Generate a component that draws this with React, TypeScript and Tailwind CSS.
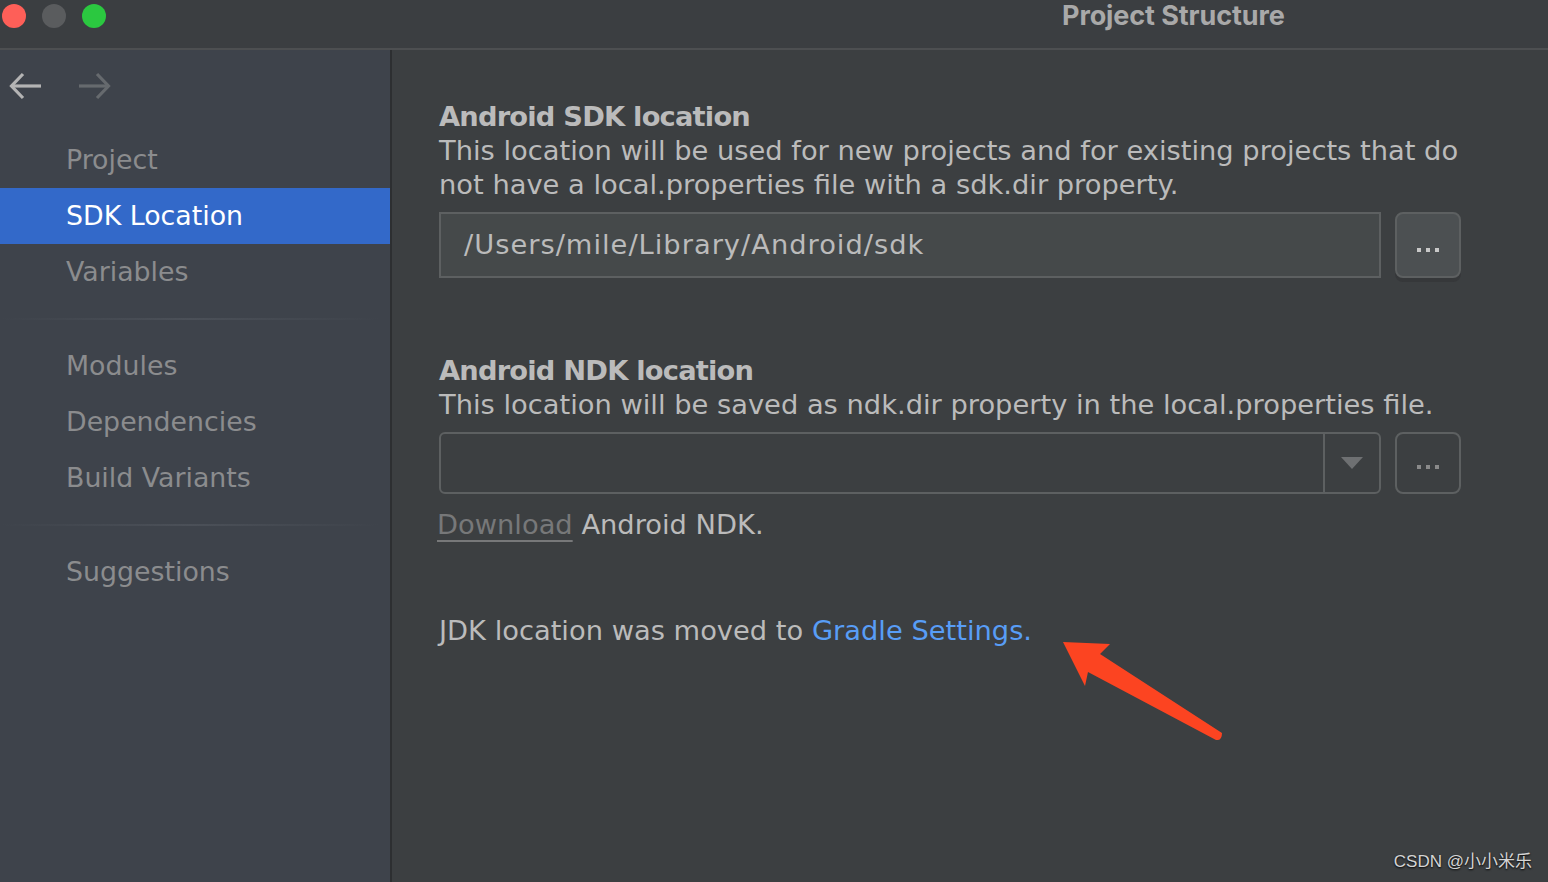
import React from 'react'

const NAV_GROUPS: string[][] = [
  ['Project', 'SDK Location', 'Variables'],
  ['Modules', 'Dependencies', 'Build Variants'],
  ['Suggestions'],
]

const UI_FONT = "font-['DejaVu_Sans',sans-serif]"

function Dots({ dim }: { dim?: boolean }) {
  const c = dim ? 'bg-[#8a8a8a]' : 'bg-[#c8c8c8]'
  return (
    <div className="flex gap-[5px] items-center">
      <span className={`w-[4px] h-[4px] ${c}`} />
      <span className={`w-[4px] h-[4px] ${c}`} />
      <span className={`w-[4px] h-[4px] ${c}`} />
    </div>
  )
}

export default function App() {
  return (
    <div className={`w-[1548px] h-[882px] bg-[#3c3f41] flex flex-col overflow-hidden relative ${UI_FONT}`}>
      {/* Title bar */}
      <div className="h-[50px] flex items-start bg-[#3b3e41] border-b-2 border-[#4d4f51] shrink-0">
        <div className="flex gap-[16px] pl-[2px] pt-[4px]">
          <span className="w-[24px] h-[24px] rounded-full bg-[#fe5f58]" />
          <span className="w-[24px] h-[24px] rounded-full bg-[#5a5c5e]" />
          <span className="w-[24px] h-[24px] rounded-full bg-[#2bc840]" />
        </div>
        <div className="ml-[956px] pt-[1px] text-[27px] leading-[30px] font-bold text-[#a9a9a9] font-['Inter',sans-serif] tracking-[-0.1px]">
          Project Structure
        </div>
      </div>

      <div className="flex flex-1">
        {/* Sidebar */}
        <div className="w-[392px] bg-[#3e434b] border-r-2 border-[#2d2f31] flex flex-col shrink-0">
          <div className="h-[82px] flex items-start gap-[36px] pl-[8px] pt-[20px]">
            <svg width="34" height="32" viewBox="0 0 34 32" fill="none" stroke="#b4b4b4" strokeWidth="3.2">
              <path d="M33 16H4" />
              <path d="M15 4L3.5 16L15 28" />
            </svg>
            <svg width="34" height="32" viewBox="0 0 34 32" fill="none" stroke="#666a6e" strokeWidth="3.2">
              <path d="M1 16H30" />
              <path d="M19 4L30.5 16L19 28" />
            </svg>
          </div>
          {NAV_GROUPS.map((group, gi) => (
            <div key={gi}>
              {gi > 0 && (
                <div className="h-[38px] flex items-center">
                  <div className="h-[2px] w-[380px] bg-gradient-to-r from-[#3e434b] via-[#4b5058] to-[#3e434b]" />
                </div>
              )}
              {group.map((item) => {
                const active = item === 'SDK Location'
                return (
                  <div
                    key={item}
                    className={`h-[56px] flex items-center pl-[66px] text-[26.8px] ${
                      active ? 'bg-[#3369c9] text-white' : 'text-[#8b8c8e]'
                    }`}
                  >
                    {item}
                  </div>
                )
              })}
            </div>
          ))}
        </div>

        {/* Main */}
        <div className="flex-1 pl-[47px] pt-[50px] text-[#bbbbbb]">
          <div className="w-[1022px] flex flex-col text-[27.3px] leading-[34px] whitespace-nowrap">
            <div className="font-bold tracking-[-0.8px]">Android SDK location</div>
            <div>This location will be used for new projects and for existing projects that do</div>
            <div>not have a local.properties file with a sdk.dir property.</div>
            <div className="flex gap-[14px] mt-[10px]">
              <div className="flex-1 h-[66px] bg-[#45494a] border-2 border-[#5d6061] flex items-center pl-[23px] tracking-[1px] text-[#bbbbbb]">
                /Users/mile/Library/Android/sdk
              </div>
              <div className="w-[66px] h-[66px] rounded-[8px] bg-[#4c5052] border-2 border-[#5d6061] shadow-[0_4px_0_#36383a] flex items-center justify-center pt-[10px]">
                <Dots />
              </div>
            </div>

            <div className="font-bold tracking-[-0.8px] mt-[76px]">Android NDK location</div>
            <div>This location will be saved as ndk.dir property in the local.properties file.</div>
            <div className="flex gap-[14px] mt-[10px]">
              <div className="flex-1 h-[62px] rounded-[6px] border-2 border-[#5d6061] flex">
                <div className="flex-1" />
                <div className="w-[56px] border-l-2 border-[#5d6061] flex items-center justify-center">
                  <svg width="22" height="12" viewBox="0 0 22 12">
                    <path d="M0 0H22L11 12Z" fill="#6e7072" />
                  </svg>
                </div>
              </div>
              <div className="w-[66px] h-[62px] rounded-[8px] border-2 border-[#5d6061] flex items-center justify-center pt-[8px]">
                <Dots dim />
              </div>
            </div>
            <div className="mt-[14px] -ml-[2px]">
              <span className="text-[#777879] underline underline-offset-[6px] decoration-2">Download</span>{' '}
              <span>Android NDK.</span>
            </div>

            <div className="mt-[72px]">
              JDK location was moved to <span className="text-[#589df6]">Gradle Settings.</span>
            </div>
          </div>
        </div>
      </div>

      {/* annotation arrow */}
      <svg className="absolute left-0 top-0 pointer-events-none" width="1548" height="882">
        <path
          d="M1063 642 L1110 644 L1100 654 L1222 733 Q1222 741 1216 740 L1088 672 L1085 686 Z"
          fill="#fc4421"
        />
      </svg>

      <div className="absolute right-[16px] bottom-[8px] text-[17px] text-[#d4d4d4] font-['Liberation_Sans','Noto_Sans_CJK_SC',sans-serif] [text-shadow:0_1px_2px_#000]">
        CSDN @小小米乐
      </div>
    </div>
  )
}
